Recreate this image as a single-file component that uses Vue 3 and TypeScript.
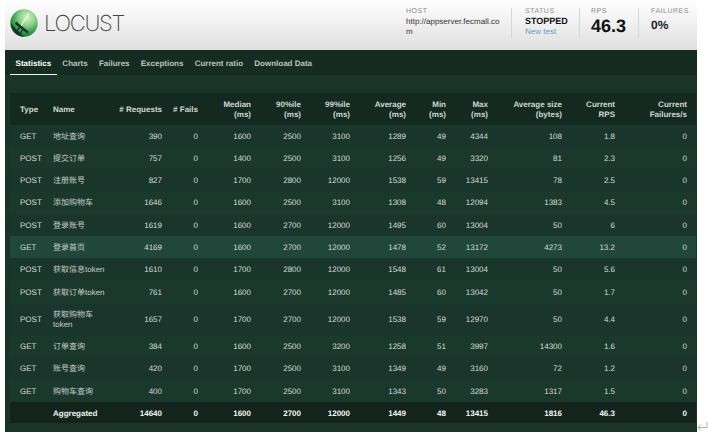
<script setup lang="ts">
interface Row { t: string; n: string; v: (string | number)[]; hi?: boolean }
const tabs = ['Statistics', 'Charts', 'Failures', 'Exceptions', 'Current ratio', 'Download Data']
const heads = ['# Requests', '# Fails', 'Median (ms)', '90%ile (ms)', '99%ile (ms)', 'Average (ms)', 'Min (ms)', 'Max (ms)', 'Average size (bytes)', 'Current RPS', 'Current Failures/s']
const rows: Row[] = [
  { t: 'GET', n: '地址查询', v: [390, 0, 1600, 2500, 3100, 1289, 49, 4344, 108, 1.8, 0] },
  { t: 'POST', n: '提交订单', v: [757, 0, 1400, 2500, 3100, 1256, 49, 3320, 81, 2.3, 0] },
  { t: 'POST', n: '注册账号', v: [827, 0, 1700, 2800, 12000, 1538, 59, 13415, 78, 2.5, 0] },
  { t: 'POST', n: '添加购物车', v: [1646, 0, 1600, 2500, 3100, 1308, 48, 12094, 1383, 4.5, 0] },
  { t: 'POST', n: '登录账号', v: [1619, 0, 1600, 2700, 12000, 1495, 60, 13004, 50, 6, 0] },
  { t: 'GET', n: '登录首页', v: [4169, 0, 1600, 2700, 12000, 1478, 52, 13172, 4273, 13.2, 0], hi: true },
  { t: 'POST', n: '获取信息token', v: [1610, 0, 1700, 2800, 12000, 1548, 61, 13004, 50, 5.6, 0] },
  { t: 'POST', n: '获取订单token', v: [761, 0, 1600, 2700, 12000, 1485, 60, 13042, 50, 1.7, 0] },
  { t: 'POST', n: '获取购物车token', v: [1657, 0, 1700, 2700, 12000, 1538, 59, 12970, 50, 4.4, 0] },
  { t: 'GET', n: '订单查询', v: [384, 0, 1600, 2500, 3200, 1258, 51, 3997, 14300, 1.6, 0] },
  { t: 'GET', n: '账号查询', v: [420, 0, 1700, 2500, 3100, 1349, 49, 3160, 72, 1.2, 0] },
  { t: 'GET', n: '购物车查询', v: [400, 0, 1700, 2500, 3100, 1343, 50, 3283, 1317, 1.5, 0] },
]
const total = [14640, 0, 1600, 2700, 12000, 1449, 48, 13415, 1816, 46.3, 0]
</script>

<template>
  <div class="page">
    <header class="top">
      <div class="brand">
        <svg class="logo" width="28" height="28" viewBox="0 0 28 28">
          <defs>
            <radialGradient id="orb" cx="0.62" cy="0.3" r="0.8">
              <stop offset="0" stop-color="#d4f2c4" />
              <stop offset="0.35" stop-color="#8ed488" />
              <stop offset="0.7" stop-color="#2f9a4e" />
              <stop offset="1" stop-color="#0e5a2a" />
            </radialGradient>
          </defs>
          <circle cx="14" cy="14" r="13.7" fill="url(#orb)" />
          <path d="M1 14 C1 22 7 27.5 14 27.7 C9 23 4 19 1 14Z" fill="#0b3a1c" />
          <path d="M19 4 C16 9 13 13 11 17" stroke="#e6f7dc" stroke-width="1.6" fill="none" opacity="0.8" />
          <path d="M6 12.5 L19 23 L17.5 24.5 L5 15 Z" fill="#1d2a25" />
          <path d="M10 18 L6 23 M13 20 L10 25" stroke="#1d2a25" stroke-width="1.4" />
        </svg>
        <span class="wordmark">LOCUST</span>
      </div>
      <div class="stats">
        <div class="stat host">
          <div class="label">Host</div>
          <div class="url">http://appserver.fecmall.com</div>
        </div>
        <div class="stat status">
          <div class="label">Status</div>
          <div class="strong">STOPPED</div>
          <a class="link">New test</a>
        </div>
        <div class="stat rps">
          <div class="label">RPS</div>
          <div class="big">46.3</div>
        </div>
        <div class="stat fail">
          <div class="label">Failures</div>
          <div class="mid">0%</div>
        </div>
      </div>
    </header>

    <nav class="tabs">
      <span v-for="(t, i) in tabs" :key="t" class="tab" :class="{ on: i === 0 }">{{ t }}</span>
    </nav>

    <main class="body">
      <table class="grid">
        <colgroup>
          <col class="c-type" /><col class="c-name" /><col class="c-req" /><col class="c-fail" />
          <col class="c-med" /><col class="c-p90" /><col class="c-p99" /><col class="c-avg" />
          <col class="c-min" /><col class="c-max" /><col class="c-size" /><col class="c-rps" /><col class="c-fs" />
        </colgroup>
        <thead>
          <tr>
            <th class="l first">Type</th>
            <th class="l">Name</th>
            <th v-for="h in heads" :key="h">{{ h }}</th>
          </tr>
        </thead>
        <tbody>
          <tr v-for="(r, i) in rows" :key="r.n" :class="{ hi: r.hi, alt: i % 2 === 1 }">
            <td class="l first">{{ r.t }}</td>
            <td class="l name">{{ r.n }}</td>
            <td v-for="(c, j) in r.v" :key="j">{{ c }}</td>
          </tr>
          <tr class="sum">
            <td class="l first"></td>
            <td class="l">Aggregated</td>
            <td v-for="(c, j) in total" :key="j">{{ c }}</td>
          </tr>
        </tbody>
      </table>
    </main>
    <svg class="ret" width="11" height="9" viewBox="0 0 11 9">
      <path d="M10 0 V5.5 H1 M4 2.5 L1 5.5 L4 8.5" fill="none" stroke="#9a9a9a" stroke-width="0.8" />
    </svg>
  </div>
</template>

<style>
html, body { margin: 0; background: #fff; }
</style>

<style scoped>
.page {
  position: relative;
  width: 708px;
  height: 440px;
  padding-left: 5px;
  box-sizing: border-box;
  overflow: hidden;
  font-family: "Liberation Sans", "Noto Sans CJK SC", sans-serif;
  font-size: 8px;
  text-rendering: geometricPrecision;
  background: #fff;
}
.top {
  width: 692px;
  height: 50px;
  display: flex;
  justify-content: space-between;
  background: linear-gradient(#fff, #dfdfdf);
  box-sizing: border-box;
}
.brand { display: flex; align-items: flex-start; padding: 9px 0 0 5px; }
.logo { display: block; }
.wordmark {
  margin: 4px 0 0 6px;
  font-family: Inter, "Liberation Sans", sans-serif;
  font-weight: 200;
  font-size: 22px;
  line-height: 22px;
  letter-spacing: -1.3px;
  color: #444;
}
.stats { display: flex; padding-top: 8px; color: #333; }
.stat { height: 30px; box-sizing: border-box; padding: 1px 0 0 12px; border-left: 1px solid #d6d6d6; }
.host { width: 105px; border-left: none; padding-left: 0; }
.status { width: 68px; padding-left: 13px; }
.rps { width: 59px; padding-left: 11px; }
.fail { width: 59px; }
.label {
  font-size: 7px;
  line-height: 6px;
  letter-spacing: 0.5px;
  text-transform: uppercase;
  color: #8a8a8a;
}
.url { width: 97px; margin-top: 2px; line-height: 9.5px; word-break: break-all; color: #333; }
.strong { margin-top: 1px; font-weight: bold; font-size: 9px; line-height: 11px; color: #111; }
.link { display: block; line-height: 10px; color: #5f9cc9; }
.big { margin-top: 2px; font-weight: bold; font-size: 18px; line-height: 19px; color: #111; }
.mid { margin-top: 4px; font-weight: bold; font-size: 12px; line-height: 13px; color: #222; }
.tabs {
  width: 692px;
  height: 25px;
  box-sizing: border-box;
  display: flex;
  padding-left: 5px;
  background: #152c23;
}
.tab {
  padding: 0 5.6px;
  line-height: 27px;
  font-weight: bold;
  color: #b9c6be;
  box-sizing: border-box;
}
.tab.on { color: #fff; border-bottom: 1px solid #f0f3f1; }
.body {
  width: 692px;
  height: 357px;
  box-sizing: border-box;
  padding: 18px 1px 0 5px;
  background: #1a342a;
}
.grid {
  width: 686px;
  table-layout: fixed;
  border-collapse: collapse;
  color: #d6ded9;
}
.c-type { width: 43px; }
.c-name { width: 62px; }
.c-req { width: 56px; }
.c-fail { width: 36px; }
.c-med { width: 53px; }
.c-p90 { width: 50px; }
.c-p99 { width: 49px; }
.c-avg { width: 56px; }
.c-min { width: 40px; }
.c-max { width: 42px; }
.c-size { width: 74px; }
.c-rps { width: 53px; }
.c-fs { width: 72px; }
th, td { text-align: right; padding: 7.1px 9px 5.2px 0; line-height: 10px; font-weight: normal; }
th { padding-top: 6.75px; padding-bottom: 4.75px; line-height: 10px; font-weight: bold; background: #142a21; color: #cfd9d3; }
.l { text-align: left; }
.first { padding-left: 10px; }
tbody tr { background: #1a352b; }
tbody tr.alt { background: #1b382d; }
tbody tr.hi { background: #21463a; }
.name { color: #c6d1cb; }
.sum { background: #12241c !important; }
.sum td { font-weight: bold; color: #f2f5f3; padding-top: 6.75px; padding-bottom: 4.75px; }
.ret { position: absolute; left: 697px; top: 422px; }
</style>
